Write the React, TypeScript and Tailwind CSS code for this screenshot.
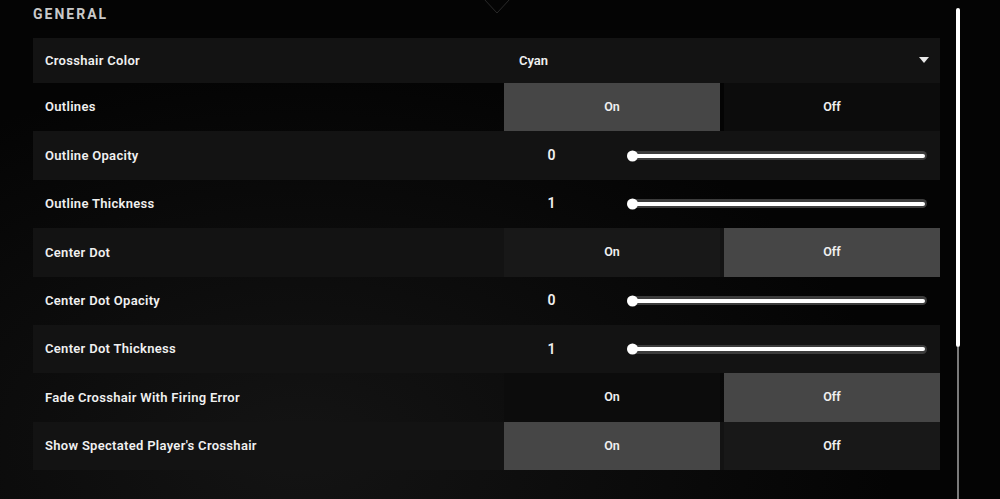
type Row =
  | { label: string; kind: "select"; value: string }
  | { label: string; kind: "toggle"; on: boolean }
  | { label: string; kind: "slider"; value: number };

const rows: Row[] = [
  { label: "Crosshair Color", kind: "select", value: "Cyan" },
  { label: "Outlines", kind: "toggle", on: true },
  { label: "Outline Opacity", kind: "slider", value: 0 },
  { label: "Outline Thickness", kind: "slider", value: 1 },
  { label: "Center Dot", kind: "toggle", on: false },
  { label: "Center Dot Opacity", kind: "slider", value: 0 },
  { label: "Center Dot Thickness", kind: "slider", value: 1 },
  { label: "Fade Crosshair With Firing Error", kind: "toggle", on: false },
  { label: "Show Spectated Player's Crosshair", kind: "toggle", on: true },
];

function Toggle({ on, light }: { on: boolean; light: boolean }) {
  const idle = light ? "bg-[#181818]" : "bg-[#0c0c0c]";
  return (
    <div className="flex h-full flex-1 gap-[4px] text-[12.5px]">
      <div
        className={`flex flex-1 items-center justify-center ${on ? "bg-[#464646]" : idle}`}
      >
        On
      </div>
      <div
        className={`flex flex-1 items-center justify-center ${!on ? "bg-[#464646]" : idle}`}
      >
        Off
      </div>
    </div>
  );
}

function Slider({ value }: { value: number }) {
  return (
    <div className="flex h-full flex-1 items-center pr-[13px]">
      <div className="w-[95px] text-center text-[14px]">{value}</div>
      <div className="ml-[28px] flex h-[9px] flex-1 items-center rounded-full bg-[#3c3c3c] px-[2px]">
        <div className="relative h-[4px] flex-1 rounded-full bg-white">
          <div className="absolute -left-[2px] top-1/2 h-[11px] w-[11px] -translate-y-1/2 rounded-full bg-white" />
        </div>
      </div>
    </div>
  );
}

function Select({ value }: { value: string }) {
  return (
    <div className="flex h-full flex-1 items-center justify-between pl-[15px] pr-[11px]">
      <span>{value}</span>
      <svg width="10" height="7" viewBox="0 0 10 7">
        <path d="M0 0 L10 0 L5 6 Z" fill="#e8e8e8" />
      </svg>
    </div>
  );
}

export default function App() {
  return (
    <div
      className="relative h-[499px] w-[1000px] overflow-hidden bg-[#040404] text-[13px] font-semibold text-[#f0f0f0]"
      style={{ fontFamily: "Roboto, 'Liberation Sans', sans-serif" }}
    >
      <div className="absolute inset-0 bg-[radial-gradient(ellipse_at_30%_90%,#141414_0%,transparent_60%)]" />
      <svg className="absolute left-[484px] top-0" width="26" height="15" viewBox="0 0 26 15">
        <path d="M0 -1 L13 13 L26 -1" stroke="#2a2a2a" strokeWidth="1" fill="none" />
      </svg>
      <div className="relative flex pl-[33px]">
        <div className="w-[907px]">
          <div className="flex h-[38px] items-start pt-[4px] text-[14px] font-bold tracking-[2px] text-[#c9c9c9]">
            GENERAL
          </div>
          {rows.map((row, i) => {
            const light = i % 2 === 0;
            return (
              <div
                key={row.label}
                className={`flex items-center ${i === 0 ? "h-[45px]" : "h-[48.4px]"} ${light ? "bg-[#131313]" : ""}`}
              >
                <div className="w-[471px] pl-[12px] tracking-[0.3px]">{row.label}</div>
                {row.kind === "select" && <Select value={row.value} />}
                {row.kind === "toggle" && <Toggle on={row.on} light={light} />}
                {row.kind === "slider" && <Slider value={row.value} />}
              </div>
            );
          })}
        </div>
        <div className="ml-[15px] flex h-[499px] w-[5px] flex-col items-center pt-[8px]">
          <div className="h-[339px] w-[4px] rounded-full bg-white" />
          <div className="w-[2px] flex-1 bg-[#7a7a7a]" />
        </div>
      </div>
    </div>
  );
}
